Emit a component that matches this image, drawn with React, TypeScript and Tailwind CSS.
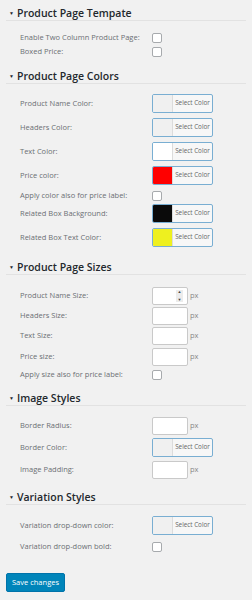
import type { ReactNode } from "react"

function Heading({ title, className }: { title: string; className: string }) {
  return (
    <div className={`flex h-[15px] items-center border-b border-[#e2e2e2] pl-[3px] ${className}`}>
      <span className="mr-[3px] text-[5px] leading-none text-[#23282d]">▼</span>
      <span className="text-[10.5px] font-semibold leading-none text-[#23282d]">{title}</span>
    </div>
  )
}

function Row({ label, className, children }: { label: string; className: string; children: ReactNode }) {
  return (
    <div className={`flex items-center pl-[14px] ${className}`}>
      <div className="w-[132px] shrink-0 text-[7.5px] leading-none text-[#6b6f73]">{label}</div>
      {children}
    </div>
  )
}

function Checkbox() {
  return <div className="h-[10px] w-[10px] rounded-[2px] border border-[#a7aaad] bg-white" />
}

function ColorButton({ swatch }: { swatch: string }) {
  return (
    <div className="flex h-[19px] w-[61px] overflow-hidden rounded-[2px] border border-[#79aed2] bg-[#f7f7f7]">
      <div className="h-full w-[20px] border-r border-[#dcdcdc]" style={{ backgroundColor: swatch }} />
      <div className="flex flex-1 items-center justify-center text-[6.3px] leading-none text-[#666]">Select Color</div>
    </div>
  )
}

function SizeInput({ spinner = false }: { spinner?: boolean }) {
  return (
    <div className="flex items-center">
      <div className="flex h-[18px] w-[36px] items-center justify-end rounded-[2px] border border-[#c9c9c9] bg-white pr-[4px]">
        {spinner && (
          <div className="flex h-[12px] w-[7px] flex-col items-center justify-between bg-[#ececec] text-[4px] leading-none text-[#444]">
            <span>▲</span>
            <span>▼</span>
          </div>
        )}
      </div>
      <span className="ml-[2px] text-[7.5px] leading-none text-[#888]">px</span>
    </div>
  )
}

export default function App() {
  return (
    <div className="min-h-[600px] w-[252px] bg-[#f1f1f1] px-[6px] font-['Open_Sans',sans-serif]">
      <div className="h-[6px]" />
      <Heading title="Product Page Tempate" className="" />
      <Row label="Enable Two Column Product Page:" className="mt-[12px] h-[10px]">
        <Checkbox />
      </Row>
      <Row label="Boxed Price:" className="mt-[4px] h-[10px]">
        <Checkbox />
      </Row>

      <Heading title="Product Page Colors" className="mt-[12px]" />
      <Row label="Product Name Color:" className="mt-[10px] h-[19px]">
        <ColorButton swatch="#f0f0f0" />
      </Row>
      <Row label="Headers Color:" className="mt-[5px] h-[19px]">
        <ColorButton swatch="#f0f0f0" />
      </Row>
      <Row label="Text Color:" className="mt-[5px] h-[19px]">
        <ColorButton swatch="#ffffff" />
      </Row>
      <Row label="Price color:" className="mt-[5px] h-[19px]">
        <ColorButton swatch="#ff0000" />
      </Row>
      <Row label="Apply color also for price label:" className="mt-[6px] h-[10px]">
        <Checkbox />
      </Row>
      <Row label="Related Box Background:" className="mt-[3px] h-[19px]">
        <ColorButton swatch="#0a0a0a" />
      </Row>
      <Row label="Related Box Text Color:" className="mt-[5px] h-[19px]">
        <ColorButton swatch="#eef01f" />
      </Row>

      <Heading title="Product Page Sizes" className="mt-[13px]" />
      <Row label="Product Name Size:" className="mt-[12px] h-[18px]">
        <SizeInput spinner />
      </Row>
      <Row label="Headers Size:" className="mt-[2px] h-[18px]">
        <SizeInput />
      </Row>
      <Row label="Text Size:" className="mt-[2px] h-[18px]">
        <SizeInput />
      </Row>
      <Row label="Price size:" className="mt-[3px] h-[18px]">
        <SizeInput />
      </Row>
      <Row label="Apply size also for price label:" className="mt-[4px] h-[10px]">
        <Checkbox />
      </Row>

      <Heading title="Image Styles" className="mt-[11px]" />
      <Row label="Border Radius:" className="mt-[11px] h-[18px]">
        <SizeInput />
      </Row>
      <Row label="Border Color:" className="mt-[3px] h-[19px]">
        <ColorButton swatch="#f0f0f0" />
      </Row>
      <Row label="Image Padding:" className="mt-[4px] h-[18px]">
        <SizeInput />
      </Row>

      <Heading title="Variation Styles" className="mt-[11px]" />
      <Row label="Variation drop-down color:" className="mt-[11px] h-[19px]">
        <ColorButton swatch="#f0f0f0" />
      </Row>
      <Row label="Variation drop-down bold:" className="mt-[7px] h-[10px]">
        <Checkbox />
      </Row>

      <button className="mt-[21px] flex h-[19px] w-[59px] items-center justify-center rounded-[2px] border border-[#0073aa] bg-[#0085ba] text-[7.5px] leading-none text-white">
        Save changes
      </button>
    </div>
  )
}
